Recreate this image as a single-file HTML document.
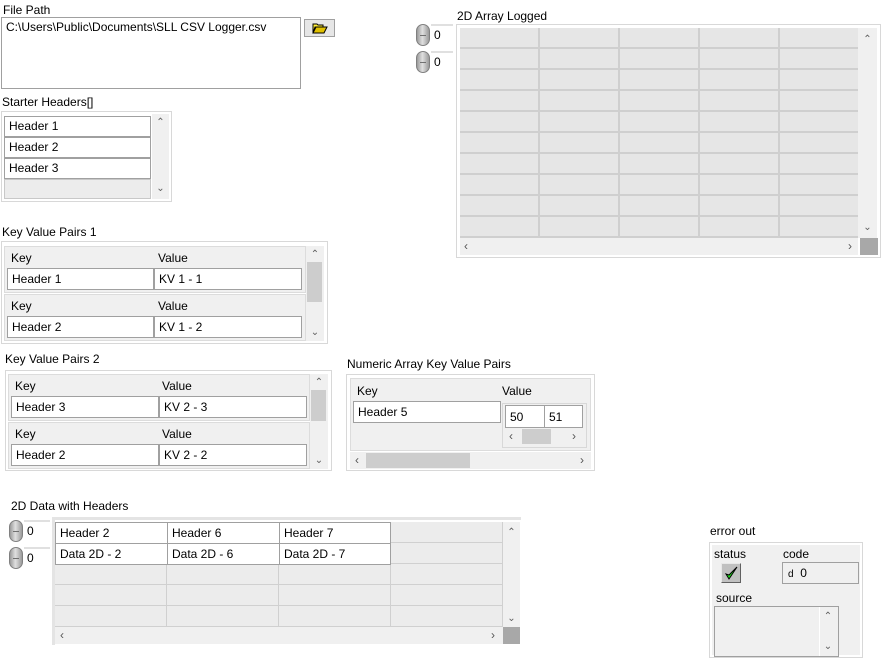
<!DOCTYPE html>
<html><head><style>
body{margin:0;width:881px;height:660px;background:#fff;position:relative;overflow:hidden;font-family:"Liberation Sans",Tahoma,sans-serif;font-size:12px;color:#000}
div{position:absolute;box-sizing:border-box}
.l{white-space:nowrap;line-height:14px}
.box{background:#fff;border:1px solid #a0a0a0;padding:2px 4px;line-height:15px;white-space:nowrap}
.fr{border:1px solid #d8d8d8;background:#fff}
.cl{background:#f0f0f0;border:1px solid #dcdcdc}
.sb{background:#f0f0f0}
.th{background:#cdcdcd}
.ar{color:#606060;font-size:10px;line-height:10px;width:100%;text-align:center}
.wc{background:#fff;border:1px solid #a0a0a0;padding:3px 4px;line-height:14px;white-space:nowrap}
.spin{width:14px;height:22px;border-radius:7px;background:linear-gradient(90deg,#9a9a9a,#e0e0e0 45%,#9a9a9a);border:1px solid #808080}
.spin:after{content:"";position:absolute;left:3px;top:10px;width:6px;height:1px;background:#707070}
.idx{background:#fff;border-top:2px solid #e0e0e0;padding-left:3px;line-height:18px;color:#000}
</style></head><body>

<div class="l" style="left:3px;top:3px">File Path</div>
<div class="box" style="left:1px;top:17px;width:300px;height:72px">C:\Users\Public\Documents\SLL CSV Logger.csv</div>
<div style="left:304px;top:19px;width:31px;height:18px;background:#e6e6e6;border:1px solid #a0a0a0">
<svg width="29" height="16" style="position:absolute;left:0;top:0"><path d="M8 4h4l1 1h5v2H10l-2 6z" fill="#ffef3a" stroke="#000"/><path d="M8 13l3-6h11l-3 6z" fill="#e0c000" stroke="#000"/></svg></div>

<div class="l" style="left:2px;top:95px">Starter Headers[]</div>
<div class="fr" style="left:1px;top:111px;width:171px;height:91px"></div>
<div class="box" style="left:4px;top:116px;width:147px;height:21px">Header 1</div>
<div class="box" style="left:4px;top:137px;width:147px;height:21px">Header 2</div>
<div class="box" style="left:4px;top:158px;width:147px;height:21px">Header 3</div>
<div style="left:4px;top:179px;width:147px;height:20px;background:#ececec;border:1px solid #c8c8c8"></div>
<div class="sb" style="left:152px;top:114px;width:17px;height:85px"><div class="ar" style="top:4px">&#8963;</div><div class="ar" style="top:70px">&#8964;</div></div>

<div class="l" style="left:457px;top:9px">2D Array Logged</div>
<div class="spin" style="left:416px;top:24px"></div><div class="idx" style="left:431px;top:24px;width:22px;height:22px">0</div>
<div class="spin" style="left:416px;top:51px"></div><div class="idx" style="left:431px;top:51px;width:22px;height:22px">0</div>
<div class="fr" style="left:456px;top:24px;width:425px;height:234px"></div>
<div style="left:460px;top:28px;width:398px;height:210px;background-image:linear-gradient(90deg,#e6e6e6 78px,#cfcfcf 78px);background-size:80px 21px;"></div>
<div style="left:460px;top:28px;width:398px;height:210px;background-image:linear-gradient(180deg,transparent 19px,#cfcfcf 19px);background-size:80px 21px;"></div>
<div class="sb" style="left:858px;top:28px;width:19px;height:210px"><div class="ar" style="top:7px">&#8963;</div><div class="ar" style="top:195px">&#8964;</div></div>
<div class="sb" style="left:460px;top:238px;width:398px;height:17px"><div class="l" style="left:4px;top:1px;color:#555">&lsaquo;</div><div class="l" style="left:388px;top:1px;color:#555">&rsaquo;</div></div>
<div style="left:860px;top:238px;width:18px;height:17px;background:#a8a8a8"></div>

<div class="l" style="left:2px;top:225px">Key Value Pairs 1</div>
<div class="fr" style="left:1px;top:241px;width:327px;height:103px"></div>
<div class="cl" style="left:4px;top:246px;width:302px;height:47px"></div>
<div class="l" style="left:11px;top:251px">Key</div><div class="l" style="left:158px;top:251px">Value</div>
<div class="wc" style="left:7px;top:268px;width:147px;height:22px">Header 1</div>
<div class="wc" style="left:154px;top:268px;width:148px;height:22px">KV 1 - 1</div>
<div class="cl" style="left:4px;top:294px;width:302px;height:47px"></div>
<div class="l" style="left:11px;top:299px">Key</div><div class="l" style="left:158px;top:299px">Value</div>
<div class="wc" style="left:7px;top:316px;width:147px;height:22px">Header 2</div>
<div class="wc" style="left:154px;top:316px;width:148px;height:22px">KV 1 - 2</div>
<div class="sb" style="left:306px;top:246px;width:18px;height:95px"><div class="ar" style="top:4px">&#8963;</div><div class="th" style="left:1px;top:16px;width:15px;height:40px"></div><div class="ar" style="top:82px">&#8964;</div></div>

<div class="l" style="left:5px;top:352px">Key Value Pairs 2</div>
<div class="fr" style="left:5px;top:370px;width:327px;height:101px"></div>
<div class="cl" style="left:8px;top:374px;width:302px;height:47px"></div>
<div class="l" style="left:15px;top:379px">Key</div><div class="l" style="left:162px;top:379px">Value</div>
<div class="wc" style="left:11px;top:396px;width:148px;height:22px">Header 3</div>
<div class="wc" style="left:159px;top:396px;width:148px;height:22px">KV 2 - 3</div>
<div class="cl" style="left:8px;top:422px;width:302px;height:47px"></div>
<div class="l" style="left:15px;top:427px">Key</div><div class="l" style="left:162px;top:427px">Value</div>
<div class="wc" style="left:11px;top:444px;width:148px;height:22px">Header 2</div>
<div class="wc" style="left:159px;top:444px;width:148px;height:22px">KV 2 - 2</div>
<div class="sb" style="left:310px;top:374px;width:18px;height:95px"><div class="ar" style="top:4px">&#8963;</div><div class="th" style="left:1px;top:16px;width:15px;height:31px"></div><div class="ar" style="top:82px">&#8964;</div></div>

<div class="l" style="left:347px;top:357px">Numeric Array Key Value Pairs</div>
<div class="fr" style="left:346px;top:374px;width:249px;height:97px"></div>
<div class="cl" style="left:350px;top:378px;width:241px;height:73px"></div>
<div class="l" style="left:357px;top:384px">Key</div><div class="l" style="left:502px;top:384px">Value</div>
<div class="wc" style="left:353px;top:401px;width:148px;height:22px">Header 5</div>
<div style="left:502px;top:403px;width:85px;height:45px;border:1px solid #d8d8d8;background:#f0f0f0"></div>
<div class="wc" style="left:505px;top:405px;width:40px;height:23px;padding-top:4px">50</div>
<div class="wc" style="left:544px;top:405px;width:39px;height:23px;padding-top:4px">51</div>
<div class="th" style="left:522px;top:429px;width:29px;height:15px"></div>
<div class="l" style="left:509px;top:429px;color:#555">&lsaquo;</div><div class="l" style="left:572px;top:429px;color:#555">&rsaquo;</div>
<div class="sb" style="left:350px;top:452px;width:241px;height:17px"><div class="th" style="left:16px;top:1px;width:104px;height:15px"></div><div class="l" style="left:5px;top:1px;color:#555">&lsaquo;</div><div class="l" style="left:230px;top:1px;color:#555">&rsaquo;</div></div>

<div class="l" style="left:11px;top:499px">2D Data with Headers</div>
<div class="spin" style="left:9px;top:520px"></div><div class="idx" style="left:24px;top:520px;width:26px;height:22px">0</div>
<div class="spin" style="left:9px;top:547px"></div><div class="idx" style="left:24px;top:547px;width:26px;height:22px">0</div>
<div style="left:52px;top:517px;width:469px;height:128px;background:#fff;border-top:3px solid #e4e4e4;border-left:3px solid #e4e4e4"></div>
<div style="left:55px;top:522px;width:448px;height:105px;background-image:linear-gradient(90deg,#ececec 111px,#d0d0d0 111px);background-size:112px 21px"></div>
<div style="left:55px;top:522px;width:448px;height:105px;background-image:linear-gradient(180deg,transparent 20px,#d0d0d0 20px);background-size:112px 21px"></div>
<div class="wc" style="left:55px;top:522px;width:113px;height:22px">Header 2</div>
<div class="wc" style="left:167px;top:522px;width:113px;height:22px">Header 6</div>
<div class="wc" style="left:279px;top:522px;width:112px;height:22px">Header 7</div>
<div class="wc" style="left:55px;top:543px;width:113px;height:22px">Data 2D - 2</div>
<div class="wc" style="left:167px;top:543px;width:113px;height:22px">Data 2D - 6</div>
<div class="wc" style="left:279px;top:543px;width:112px;height:22px">Data 2D - 7</div>
<div class="sb" style="left:503px;top:522px;width:17px;height:105px"><div class="ar" style="top:6px">&#8963;</div><div class="ar" style="top:92px">&#8964;</div></div>
<div class="sb" style="left:55px;top:627px;width:448px;height:17px"><div class="l" style="left:5px;top:1px;color:#555">&lsaquo;</div><div class="l" style="left:436px;top:1px;color:#555">&rsaquo;</div></div>
<div style="left:503px;top:627px;width:17px;height:17px;background:#a8a8a8"></div>

<div class="l" style="left:710px;top:524px">error out</div>
<div class="fr" style="left:709px;top:542px;width:154px;height:116px"></div>
<div style="left:712px;top:545px;width:148px;height:110px;background:#f0f0f0"></div>
<div class="l" style="left:714px;top:547px">status</div><div class="l" style="left:783px;top:547px">code</div>
<div style="left:721px;top:563px;width:20px;height:20px;background:#c0c0c0;border:1px solid;border-color:#e8e8e8 #606060 #606060 #e8e8e8"><svg width="18" height="18" style="position:absolute;left:0;top:0"><polygon points="4,10 7,15 15,3 7,11" fill="#20e020" stroke="#000" stroke-width="1"/></svg></div>
<div style="left:782px;top:562px;width:77px;height:22px;border:1px solid #a0a0a0;background:#f0f0f0;padding:3px 5px;line-height:14px"><span style="font-size:10px">d</span>&nbsp; 0</div>
<div class="l" style="left:716px;top:591px">source</div>
<div style="left:714px;top:606px;width:125px;height:51px;border:1px solid #a0a0a0;background:#f0f0f0"></div>
<div style="left:819px;top:607px;width:1px;height:49px;background:#fff"></div>
<div class="ar" style="left:820px;top:612px;width:16px">&#8963;</div>
<div class="ar" style="left:820px;top:642px;width:16px">&#8964;</div>
</body></html>
